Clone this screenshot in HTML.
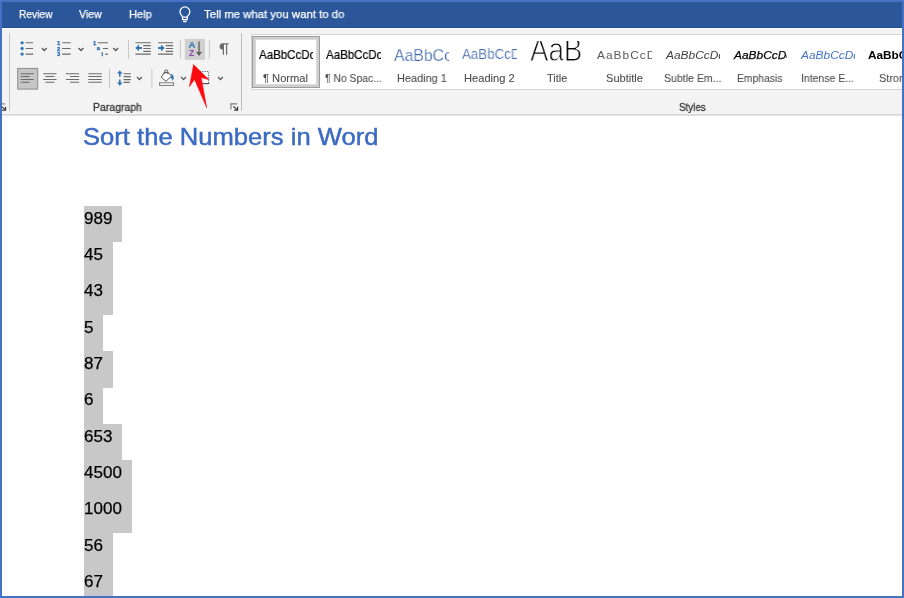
<!DOCTYPE html>
<html>
<head>
<meta charset="utf-8">
<title>Sort the Numbers in Word</title>
<style>
html,body{margin:0;padding:0;}
body{width:904px;height:598px;position:relative;overflow:hidden;background:#fff;font-family:"Liberation Sans", sans-serif;}
.t{position:absolute;white-space:nowrap;line-height:1;transform-origin:0 0;will-change:transform;}
.clip{position:absolute;overflow:hidden;}
#frame{position:absolute;left:0;top:0;width:904px;height:598px;box-sizing:border-box;border:2px solid #4472C4;z-index:50;}
#tabbar{position:absolute;left:0;top:0;width:904px;height:28px;background:#2B579A;border-bottom:1px solid #1F4E8C;box-sizing:border-box;}
#ribbon{position:absolute;left:0;top:28px;width:904px;height:86px;background:#F3F3F3;border-top:1px solid #FCFCFC;box-sizing:border-box;}
#ribline{position:absolute;left:0;top:113.5px;width:904px;height:2.5px;background:linear-gradient(#E2E2E2,#D2D2D2 50%,#F0F0F0);}
.vsep{position:absolute;width:1px;background:#C6C6C6;}
#gallery{position:absolute;left:250.6px;top:34.3px;width:660px;height:55.6px;background:#fff;border:1px solid #D6D6D6;box-sizing:border-box;}
#selstyle{position:absolute;left:252px;top:36px;width:68px;height:52.3px;box-sizing:border-box;border:1px solid #9C9C9C;box-shadow:inset 0 0 0 2.8px #CFCFCF;}
.hl{position:absolute;background:#C8C8C8;left:83.8px;}
#icons{position:absolute;left:0;top:0;will-change:transform;}
</style>
</head>
<body>
<div id="tabbar"></div>
<div id="ribbon"></div>
<div id="ribline"></div>
<div id="gallery"></div>
<div id="selstyle"></div>
<div class="vsep" style="left:9px;top:33px;height:78px;"></div>
<div class="vsep" style="left:241px;top:33px;height:78px;background:#BDBDBD;"></div>
<div class="hl" style="top:205.80px;width:38.6px;height:36.63px;"></div>
<div class="hl" style="top:242.13px;width:29.1px;height:36.63px;"></div>
<div class="hl" style="top:278.46px;width:29.1px;height:36.63px;"></div>
<div class="hl" style="top:314.79px;width:19.7px;height:36.63px;"></div>
<div class="hl" style="top:351.12px;width:29.1px;height:36.63px;"></div>
<div class="hl" style="top:387.45px;width:19.7px;height:36.63px;"></div>
<div class="hl" style="top:423.78px;width:38.6px;height:36.63px;"></div>
<div class="hl" style="top:460.11px;width:48.0px;height:36.63px;"></div>
<div class="hl" style="top:496.44px;width:48.0px;height:36.63px;"></div>
<div class="hl" style="top:532.77px;width:29.1px;height:36.63px;"></div>
<div class="hl" style="top:569.10px;width:29.1px;height:36.63px;"></div>
<svg id="icons" width="904" height="598" viewBox="0 0 904 598" font-family="Liberation Sans, sans-serif">
<!-- light bulb -->
<g fill="none" stroke="#fff" stroke-width="1.3" stroke-linejoin="round" stroke-linecap="round">
  <path d="M182.6 17.2 C182.6 15.7 179.95 14.6 179.95 11.9 A4.95 4.95 0 0 1 189.85 11.9 C189.85 14.6 187.2 15.7 187.2 17.2 Z"/>
  <path d="M182.6 17.2 V19.6 H187.2 V17.2"/>
  <path d="M183.6 21.5 H186.2"/>
</g>

<!-- highlighted buttons -->
<rect x="184.8" y="38.9" width="20.1" height="20.9" fill="#CFCFCF"/>
<rect x="17.7" y="68.4" width="20" height="20.7" fill="#C6C6C6" stroke="#8A8A8A" stroke-width="1"/>

<!-- thin separators -->
<g stroke="#C8C8C8" stroke-width="1">
  <path d="M128.5 40 V59"/><path d="M180.4 40 V59"/><path d="M209.4 40 V59"/>
  <path d="M109.5 69 V88.2"/><path d="M151.9 69 V88.2"/>
</g>

<!-- chevrons -->
<g fill="none" stroke="#555" stroke-width="1.25">
  <path d="M41.9 48 L44.3 50.5 L46.7 48"/>
  <path d="M78.6 48 L81 50.5 L83.4 48"/>
  <path d="M113.3 48 L115.7 50.5 L118.1 48"/>
  <path d="M137 77 L139.4 79.6 L141.8 77"/>
  <path d="M181.1 77 L183.5 79.6 L185.9 77"/>
  <path d="M218 77 L220.4 79.6 L222.8 77"/>
</g>

<!-- bullets -->
<g fill="#2E74B5"><circle cx="22.1" cy="42.8" r="1.65"/><circle cx="22.1" cy="48.5" r="1.65"/><circle cx="22.1" cy="54.1" r="1.65"/></g>
<g stroke="#6B6B6B" stroke-width="1.1">
  <path d="M25.6 42.8 H33.1 M25.6 48.5 H33.1 M25.6 54.1 H33.1"/>
  <!-- numbering lines -->
  <path d="M62.1 42.8 H70.7 M62.1 48.5 H70.7 M62.1 54.1 H70.7"/>
  <!-- multilevel lines -->
  <path d="M97.9 42.8 H108 M102.9 48.5 H108 M105.2 54.1 H108"/>
  <!-- decrease indent -->
  <path d="M135.4 42.8 H150.8 M143.3 45.6 H150.8 M143.3 48.5 H150.8 M143.3 51.4 H150.8 M135.4 54.1 H150.8"/>
  <!-- increase indent -->
  <path d="M158.1 42.8 H173.1 M165.8 45.6 H173.1 M165.8 48.5 H173.1 M165.8 51.4 H173.1 M158.1 54.1 H173.1"/>
  <!-- align left -->
  <path d="M20.7 73.7 H33.8 M20.7 76.5 H29.9 M20.7 79.5 H33.8 M20.7 82.3 H29.9"/>
  <!-- center -->
  <path d="M43.2 73.7 H56.5 M45.4 76.5 H54.6 M43.2 79.5 H56.5 M45.4 82.3 H54.6"/>
  <!-- right -->
  <path d="M65.9 73.7 H79.1 M70 76.5 H79.1 M65.9 79.5 H79.1 M70 82.3 H79.1"/>
  <!-- justify -->
  <path d="M88.3 73.7 H101.8 M88.3 76.5 H101.8 M88.3 79.5 H101.8 M88.3 82.3 H101.8"/>
  <!-- line spacing lines -->
  <path d="M123.6 73.8 H130.9 M123.6 76.6 H130.9 M123.6 79.6 H130.9 M123.6 82.4 H129.8"/>
</g>

<!-- numbering digits -->
<g fill="#2467B2" stroke="#2467B2" stroke-width="0.25" font-size="5.8" font-weight="700" text-anchor="middle">
  <text x="58.6" y="44.8">1</text><text x="58.6" y="50.5">2</text><text x="58.6" y="56.2">3</text>
  <text x="94.5" y="45">1</text><text x="98.4" y="50">a</text><text x="102.2" y="56.1">i</text>
</g>

<!-- indent arrows -->
<g fill="#2E74B5">
  <path d="M135.4 47.9 L139 44.6 V46.9 H141.9 V48.9 H139 V51.2 Z"/>
  <path d="M164.6 47.9 L161 44.6 V46.9 H158.1 V48.9 H161 V51.2 Z"/>
  <!-- line spacing arrows -->
  <path d="M119.8 70.4 L122.6 73.6 H120.6 V76.8 H119 V73.6 H117 Z"/>
  <path d="M119.8 85.8 L122.6 82.6 H120.6 V79.4 H119 V82.6 H117 Z"/>
</g>

<!-- sort A Z arrow -->
<text x="191.9" y="47.9" font-size="9.6" font-weight="700" fill="#2E74B5" text-anchor="middle">A</text>
<text x="191.7" y="55.9" font-size="9.2" font-weight="700" fill="#8E44AD" text-anchor="middle" textLength="5.2" lengthAdjust="spacingAndGlyphs">Z</text>
<path d="M199 41.4 V53.5" stroke="#6A6A6A" stroke-width="1.5" fill="none"/><path d="M195.9 51.6 Q199 53.2 202.1 51.6 L199 55.9 Z" fill="#555"/>

<!-- pilcrow -->
<g fill="#6B6B6B">
  <path d="M223 43.3 H228.6 V44.5 H227.2 V54.8 H226 V44.5 H224 V54.8 H222.8 V49.6 A3.2 3.15 0 0 1 222.8 43.3 Z"/>
</g>

<!-- shading bucket -->
<g>
  <path d="M164.3 72.4 L167.9 72.4 L171.6 76 L166 81.2 L161.3 77.3 Z" fill="#fff" stroke="#555" stroke-width="1"/>
  <path d="M164.7 74 V71.6 A1.55 1.6 0 0 1 167.8 71.6 V74" fill="none" stroke="#555" stroke-width="1"/>
  <path d="M170.9 74.1 C173.6 74.6 174.8 77.8 172.6 81 C172.2 79.4 171.5 78.2 170 77.6 L171.8 76 Z" fill="#2E74B5"/>
  <rect x="159.6" y="82.8" width="14" height="2.6" fill="#fff" stroke="#777" stroke-width="1"/>
</g>

<!-- borders icon -->
<rect x="198" y="71.6" width="10.6" height="11.6" fill="#fff"/>
<g fill="none" stroke="#555" stroke-width="1.1">
  <path d="M197.5 71.5 H208.6 V83" stroke-dasharray="1.2 1.2"/>
  <path d="M197.5 71.5 V83" stroke-dasharray="1.2 1.2"/>
  <path d="M197.5 77.4 H208.4 M203 71.4 V83" stroke="#A9C3DC" stroke-dasharray="1.2 1.2"/>
  <path d="M197 83.6 H209.1" stroke="#555" stroke-width="1.2"/>
</g>

<!-- dialog launchers -->
<g fill="none" stroke-linecap="butt">
  <path d="M230.9 109.6 V103.9 H236.9" stroke="#7A7A7A" stroke-width="1.1"/>
  <path d="M233.3 106.4 L237.3 110" stroke="#333" stroke-width="1.1"/>
  <path d="M234 110.3 H237.6 V106.7" stroke="#333" stroke-width="1.1"/>
  <path d="M1.5 106.4 L5.3 110" stroke="#333" stroke-width="1.1"/>
  <path d="M2 110.3 H5.6 V106.7" stroke="#333" stroke-width="1.1"/>
  <path d="M2 103.9 H5" stroke="#7A7A7A" stroke-width="1.1"/>
</g>

<!-- red arrow -->
<path d="M193.55 64.6 L209 79.8 L201.2 77.6 L206.7 107.8 L194.5 79.4 L189.4 86.7 Z" fill="#FD080E" stroke="#FD080E" stroke-width="0.5" stroke-linejoin="round"/>
</svg>

<span class="t" style="left:19.40px;top:8.57px;font-size:11.5px;color:#fff;transform:scaleX(0.8854);-webkit-text-stroke:0.25px #fff;">Review</span>
<span class="t" style="left:79.30px;top:8.57px;font-size:11.5px;color:#fff;transform:scaleX(0.9168);-webkit-text-stroke:0.25px #fff;">View</span>
<span class="t" style="left:128.90px;top:8.57px;font-size:11.5px;color:#fff;transform:scaleX(0.9675);-webkit-text-stroke:0.25px #fff;">Help</span>
<span class="t" style="left:204.20px;top:8.57px;font-size:11.5px;color:#fff;transform:scaleX(0.9893);-webkit-text-stroke:0.25px #fff;">Tell me what you want to do</span>
<div class="clip" style="left:0.0px;top:95.0px;width:904.0px;height:18.4px;"><span class="t" style="left:92.80px;top:6.73px;font-size:10.6px;color:#363636;transform:scaleX(0.9883);-webkit-text-stroke:0.3px #363636;">Paragraph</span></div>
<div class="clip" style="left:0.0px;top:95.0px;width:904.0px;height:18.4px;"><span class="t" style="left:678.60px;top:6.73px;font-size:10.6px;color:#363636;transform:scaleX(0.9246);-webkit-text-stroke:0.3px #363636;">Styles</span></div>
<span class="t" style="left:263.20px;top:72.99px;font-size:11px;color:#4E4E4E;transform:scaleX(1.0143);-webkit-text-stroke:0.1px #4E4E4E;">¶ Normal</span>
<span class="t" style="left:325.10px;top:72.99px;font-size:11px;color:#4E4E4E;transform:scaleX(0.9408);-webkit-text-stroke:0.1px #4E4E4E;">¶ No Spac...</span>
<span class="t" style="left:396.50px;top:72.99px;font-size:11px;color:#4E4E4E;transform:scaleX(0.9934);-webkit-text-stroke:0.1px #4E4E4E;">Heading 1</span>
<span class="t" style="left:464.00px;top:72.99px;font-size:11px;color:#4E4E4E;transform:scaleX(1.0113);-webkit-text-stroke:0.1px #4E4E4E;">Heading 2</span>
<span class="t" style="left:547.20px;top:72.99px;font-size:11px;color:#4E4E4E;transform:scaleX(0.9973);-webkit-text-stroke:0.1px #4E4E4E;">Title</span>
<span class="t" style="left:606.30px;top:72.99px;font-size:11px;color:#4E4E4E;transform:scaleX(1.0062);-webkit-text-stroke:0.1px #4E4E4E;">Subtitle</span>
<span class="t" style="left:663.50px;top:72.99px;font-size:11px;color:#4E4E4E;transform:scaleX(0.9606);-webkit-text-stroke:0.1px #4E4E4E;">Subtle Em...</span>
<span class="t" style="left:737.00px;top:72.99px;font-size:11px;color:#4E4E4E;transform:scaleX(0.9406);-webkit-text-stroke:0.1px #4E4E4E;">Emphasis</span>
<span class="t" style="left:800.55px;top:72.99px;font-size:11px;color:#4E4E4E;transform:scaleX(0.9508);-webkit-text-stroke:0.1px #4E4E4E;">Intense E...</span>
<span class="t" style="left:878.50px;top:72.99px;font-size:11px;color:#4E4E4E;transform:scaleX(0.9866);-webkit-text-stroke:0.1px #4E4E4E;">Strong</span>
<div class="clip" style="left:255.0px;top:35.0px;width:58.2px;height:35.0px;"><span class="t" style="left:3.50px;top:14.37px;font-size:12.2px;color:#000;transform:scaleX(0.9458);-webkit-text-stroke:0.2px #000;">AaBbCcDc</span></div>
<div class="clip" style="left:322.0px;top:35.0px;width:58.6px;height:35.0px;"><span class="t" style="left:4.30px;top:14.37px;font-size:12.2px;color:#000;transform:scaleX(0.9458);-webkit-text-stroke:0.2px #000;">AaBbCcDc</span></div>
<div class="clip" style="left:390.0px;top:35.0px;width:58.6px;height:35.0px;"><span class="t" style="left:4.20px;top:11.62px;font-size:16.4px;color:#3A63AE;transform:scaleX(0.9636);-webkit-text-stroke:0.25px #fff;">AaBbCc</span></div>
<div class="clip" style="left:458.0px;top:35.0px;width:58.5px;height:35.0px;"><span class="t" style="left:4.30px;top:12.35px;font-size:14px;color:#3A63AE;transform:scaleX(0.9521);-webkit-text-stroke:0.2px #fff;">AaBbCcD</span></div>
<div class="clip" style="left:525.0px;top:41.4px;width:65.0px;height:28.6px;"><span class="t" style="left:4.50px;top:-7.70px;font-size:32.6px;color:#000;transform:scaleX(0.8513);-webkit-text-stroke:1.1px #fff;">AaB</span></div>
<div class="clip" style="left:594.0px;top:35.0px;width:57.9px;height:35.0px;"><span class="t" style="left:3.10px;top:14.81px;font-size:11.8px;color:#5A5A5A;transform:scaleX(1.0089);letter-spacing:1.0px;">AaBbCcD</span></div>
<div class="clip" style="left:660.0px;top:35.0px;width:59.8px;height:35.0px;"><span class="t" style="left:6.21px;top:14.81px;font-size:11.8px;color:#404040;transform:scaleX(1.0098);font-style:italic;">AaBbCcDc</span></div>
<div class="clip" style="left:728.0px;top:35.0px;width:59.3px;height:35.0px;"><span class="t" style="left:5.81px;top:14.81px;font-size:11.8px;color:#000;transform:scaleX(1.0098);font-style:italic;-webkit-text-stroke:0.25px #000;">AaBbCcDc</span></div>
<div class="clip" style="left:796.0px;top:35.0px;width:58.7px;height:35.0px;"><span class="t" style="left:5.31px;top:14.81px;font-size:11.8px;color:#4472C4;transform:scaleX(1.0098);font-style:italic;">AaBbCcDc</span></div>
<div class="clip" style="left:864.0px;top:35.0px;width:40.0px;height:35.0px;"><span class="t" style="left:3.90px;top:14.81px;font-size:11.8px;color:#000;transform:scaleX(0.9935);font-weight:700;">AaBbCcDc</span></div>
<span class="t" style="left:83.12px;top:125.15px;font-size:23.8px;color:#3B6AC2;transform:scaleX(1.0756);-webkit-text-stroke:0.45px #3B6AC2;">Sort the Numbers in Word</span>
<span class="t" style="left:83.60px;top:209.61px;font-size:17px;color:#000;transform:scaleX(1.0006);-webkit-text-stroke:0.25px #000;">989</span>
<span class="t" style="left:83.60px;top:245.94px;font-size:17px;color:#000;transform:scaleX(1.0006);-webkit-text-stroke:0.25px #000;">45</span>
<span class="t" style="left:83.60px;top:282.27px;font-size:17px;color:#000;transform:scaleX(1.0006);-webkit-text-stroke:0.25px #000;">43</span>
<span class="t" style="left:83.60px;top:318.60px;font-size:17px;color:#000;transform:scaleX(1.0006);-webkit-text-stroke:0.25px #000;">5</span>
<span class="t" style="left:83.60px;top:354.93px;font-size:17px;color:#000;transform:scaleX(1.0006);-webkit-text-stroke:0.25px #000;">87</span>
<span class="t" style="left:83.60px;top:391.26px;font-size:17px;color:#000;transform:scaleX(1.0006);-webkit-text-stroke:0.25px #000;">6</span>
<span class="t" style="left:83.60px;top:427.59px;font-size:17px;color:#000;transform:scaleX(1.0006);-webkit-text-stroke:0.25px #000;">653</span>
<span class="t" style="left:83.60px;top:463.92px;font-size:17px;color:#000;transform:scaleX(1.0006);-webkit-text-stroke:0.25px #000;">4500</span>
<span class="t" style="left:83.60px;top:500.25px;font-size:17px;color:#000;transform:scaleX(1.0006);-webkit-text-stroke:0.25px #000;">1000</span>
<span class="t" style="left:83.60px;top:536.58px;font-size:17px;color:#000;transform:scaleX(1.0006);-webkit-text-stroke:0.25px #000;">56</span>
<span class="t" style="left:83.60px;top:572.91px;font-size:17px;color:#000;transform:scaleX(1.0006);-webkit-text-stroke:0.25px #000;">67</span>
<div id="frame"></div>
</body>
</html>
